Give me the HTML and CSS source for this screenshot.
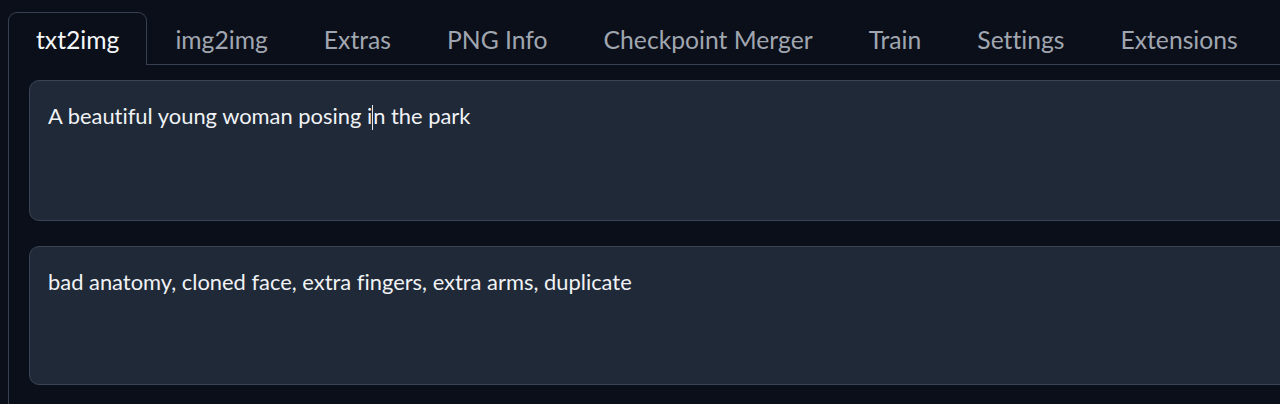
FILE: index.html
```html
<!DOCTYPE html>
<html lang="en">
<head>
<meta charset="utf-8">
<title>Stable Diffusion web UI</title>
<link rel="stylesheet" href="styles.css">
</head>
<body>
<div class="app">
  <nav class="tabs">
    <div class="tab active">txt2img</div>
    <div class="tab">img2img</div>
    <div class="tab">Extras</div>
    <div class="tab">PNG Info</div>
    <div class="tab">Checkpoint Merger</div>
    <div class="tab">Train</div>
    <div class="tab">Settings</div>
    <div class="tab">Extensions</div>
  </nav>
  <div class="panel">
    <div class="prompt first">A beautiful young woman posing i<span class="caret"></span>n the park</div>
    <div class="prompt">bad anatomy, cloned face, extra fingers, extra arms, duplicate</div>
  </div>
</div>
</body>
</html>
```

FILE: styles.css
```css
html, body {
  margin: 0;
  padding: 0;
  background: #0b0f19;
  overflow: hidden;
  height: 404px;
}
.app {
  padding: 12px 0 0 8px;
  width: 1400px;
  font-family: Lato, "Liberation Sans", sans-serif;
  font-variant-ligatures: none;
}
.tabs {
  display: flex;
  border-bottom: 1px solid #374151;
  height: 52px;
}
.tab {
  padding: 1px 27px 0;
  font-size: 24.7px;
  line-height: 52px;
  color: #a0a6b0;
  border: 1px solid transparent;
  border-bottom: none;
  white-space: nowrap;
}
.tab.active {
  color: #f5f6f8;
  border-color: #374151;
  border-radius: 9px 9px 0 0;
  background: #0b0f19;
  margin-bottom: -1px;
  height: 53px;
  box-sizing: border-box;
}
.panel {
  border-left: 1px solid #374151;
  padding: 15px 0 40px 20px;
  display: flex;
  flex-direction: column;
  gap: 25px;
}
.prompt {
  border: 1px solid #3a4454;
  border-radius: 10px;
  background: #1f2937;
  padding: 19px 18px;
  box-sizing: border-box;
  height: 139px;
  font-size: 21.9px;
  line-height: 32px;
  color: #f0f2f5;
  white-space: nowrap;
}
.prompt.first {
  height: 141px;
}
.caret {
  display: inline-block;
  width: 1px;
  height: 25px;
  background: #e5e7eb;
  vertical-align: -6px;
}
```
